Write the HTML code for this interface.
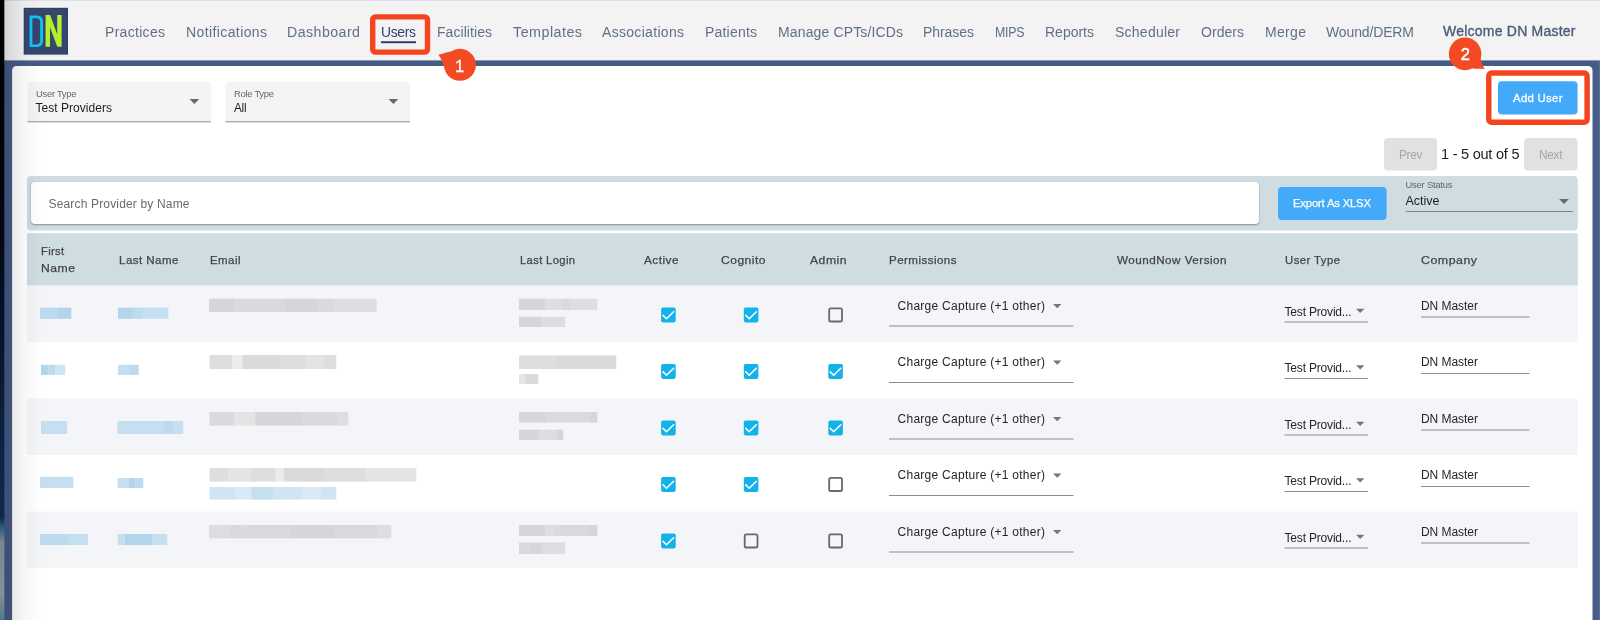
<!DOCTYPE html>
<html><head><meta charset="utf-8"><title>Users</title>
<style>
html,body{margin:0;padding:0;}
body{width:1600px;height:620px;overflow:hidden;position:relative;background:#465b86;font-family:"Liberation Sans",sans-serif;}
.a{position:absolute;}
.t{position:absolute;white-space:nowrap;line-height:16px;height:16px;}
.layer{position:absolute;left:0;top:0;width:1600px;height:620px;}
</style></head><body>
<svg class="layer" width="1600" height="620" viewBox="0 0 1600 620">
<rect x="0" y="0" width="1600" height="60.4" fill="#f3f3f3"/>
<rect x="0" y="0" width="1600" height="0.9" fill="#d9dcea"/>
<path d="M12.1 620 V70.5 a4.5 4.5 0 0 1 4.5 -4.5 H1588 a4.5 4.5 0 0 1 4.5 4.5 V620 Z" fill="#fff"/>
<g transform="translate(23.7 7.8)"><rect width="44.3" height="46.8" fill="#283860"/><rect x="0.6" y="0.7" width="43.1" height="45.5" fill="#35476e"/><path d="M5.9 7.7 H12.6 C17.3 7.7 19.3 10.2 19.3 14.7 V32.3 C19.3 36.8 17.3 39.3 12.6 39.3 H5.9 Z M8.7 10.4 V36.6 H12.5 C15.4 36.6 16.5 35.1 16.5 32.3 V14.7 C16.5 11.9 15.4 10.4 12.5 10.4 Z" fill="#12c2f4" fill-rule="evenodd"/><path d="M21.9 39 V7.3 H26.4 L33.5 26.5 V7.3 H37.9 V39 H33.6 L26.3 19.5 V39 Z" fill="#b6ef2e"/></g>
<rect x="381" y="41.2" width="35" height="2" fill="#2f426e"/>
<path d="M27.3 122 V85.7 a4 4 0 0 1 4 -4 H207 a4 4 0 0 1 4 4 V122 Z" fill="#f4f4f4"/>
<rect x="27.3" y="121.3" width="183.7" height="1" fill="#8f8f8f"/>
<path d="M189.50 99.10 h9.80 l-4.90 5.00 Z" fill="#6a6a6a"/>
<path d="M225.3 122 V85.7 a4 4 0 0 1 4 -4 H406 a4 4 0 0 1 4 4 V122 Z" fill="#f4f4f4"/>
<rect x="225.3" y="121.3" width="184.7" height="1" fill="#8f8f8f"/>
<path d="M388.50 99.10 h9.80 l-4.90 5.00 Z" fill="#6a6a6a"/>
<rect x="1498" y="81.3" width="79.6" height="33.2" rx="4" fill="#43aaf9"/>
<rect x="1384" y="138" width="53.1" height="32.6" rx="4" fill="#e1e1e1"/>
<rect x="1524" y="138" width="53.6" height="32.6" rx="4" fill="#e1e1e1"/>
<rect x="27" y="176" width="1550.7" height="54.4" rx="4" fill="#cfdce1"/>
<rect x="1278" y="187" width="108.6" height="33" rx="4" fill="#43aaf9"/>
<rect x="1405.5" y="211" width="167.5" height="1" fill="#858585"/>
<path d="M1559.10 198.90 h9.80 l-4.90 5.00 Z" fill="#6a6a6a"/>
<rect x="27" y="233.3" width="1550.7" height="52.4" fill="#cfdce1"/>
<rect x="27" y="285.50" width="1550.7" height="56.5" fill="#f4f5f9"/>
<rect x="661.10" y="307.40" width="14.6" height="15" rx="1.8" fill="#13b3e9"/><path d="M663.10 315.40 l3.4 3.3 l7.1 -7.0" fill="none" stroke="#fff" stroke-width="1.55" stroke-linecap="round" stroke-linejoin="round"/>
<rect x="743.80" y="307.40" width="14.6" height="15" rx="1.8" fill="#13b3e9"/><path d="M745.80 315.40 l3.4 3.3 l7.1 -7.0" fill="none" stroke="#fff" stroke-width="1.55" stroke-linecap="round" stroke-linejoin="round"/>
<rect x="829.20" y="308.30" width="12.8" height="13.2" rx="1.6" fill="none" stroke="#686868" stroke-width="1.8"/>
<rect x="889" y="325.50" width="184.5" height="1" fill="#8c8c8c"/><path d="M1053.00 303.90 h8.40 l-4.20 4.40 Z" fill="#777"/>
<rect x="1284.5" y="321.50" width="83.5" height="1" fill="#8c8c8c"/><path d="M1356.00 308.70 h8.40 l-4.20 4.40 Z" fill="#777"/>
<rect x="1421" y="316.50" width="108.5" height="1" fill="#8c8c8c"/>
<rect x="661.10" y="363.90" width="14.6" height="15" rx="1.8" fill="#13b3e9"/><path d="M663.10 371.90 l3.4 3.3 l7.1 -7.0" fill="none" stroke="#fff" stroke-width="1.55" stroke-linecap="round" stroke-linejoin="round"/>
<rect x="743.80" y="363.90" width="14.6" height="15" rx="1.8" fill="#13b3e9"/><path d="M745.80 371.90 l3.4 3.3 l7.1 -7.0" fill="none" stroke="#fff" stroke-width="1.55" stroke-linecap="round" stroke-linejoin="round"/>
<rect x="828.30" y="363.90" width="14.6" height="15" rx="1.8" fill="#13b3e9"/><path d="M830.30 371.90 l3.4 3.3 l7.1 -7.0" fill="none" stroke="#fff" stroke-width="1.55" stroke-linecap="round" stroke-linejoin="round"/>
<rect x="889" y="382.00" width="184.5" height="1" fill="#8c8c8c"/><path d="M1053.00 360.40 h8.40 l-4.20 4.40 Z" fill="#777"/>
<rect x="1284.5" y="378.00" width="83.5" height="1" fill="#8c8c8c"/><path d="M1356.00 365.20 h8.40 l-4.20 4.40 Z" fill="#777"/>
<rect x="1421" y="373.00" width="108.5" height="1" fill="#8c8c8c"/>
<rect x="27" y="398.50" width="1550.7" height="56.5" fill="#f4f5f9"/>
<rect x="661.10" y="420.40" width="14.6" height="15" rx="1.8" fill="#13b3e9"/><path d="M663.10 428.40 l3.4 3.3 l7.1 -7.0" fill="none" stroke="#fff" stroke-width="1.55" stroke-linecap="round" stroke-linejoin="round"/>
<rect x="743.80" y="420.40" width="14.6" height="15" rx="1.8" fill="#13b3e9"/><path d="M745.80 428.40 l3.4 3.3 l7.1 -7.0" fill="none" stroke="#fff" stroke-width="1.55" stroke-linecap="round" stroke-linejoin="round"/>
<rect x="828.30" y="420.40" width="14.6" height="15" rx="1.8" fill="#13b3e9"/><path d="M830.30 428.40 l3.4 3.3 l7.1 -7.0" fill="none" stroke="#fff" stroke-width="1.55" stroke-linecap="round" stroke-linejoin="round"/>
<rect x="889" y="438.50" width="184.5" height="1" fill="#8c8c8c"/><path d="M1053.00 416.90 h8.40 l-4.20 4.40 Z" fill="#777"/>
<rect x="1284.5" y="434.50" width="83.5" height="1" fill="#8c8c8c"/><path d="M1356.00 421.70 h8.40 l-4.20 4.40 Z" fill="#777"/>
<rect x="1421" y="429.50" width="108.5" height="1" fill="#8c8c8c"/>
<rect x="661.10" y="476.90" width="14.6" height="15" rx="1.8" fill="#13b3e9"/><path d="M663.10 484.90 l3.4 3.3 l7.1 -7.0" fill="none" stroke="#fff" stroke-width="1.55" stroke-linecap="round" stroke-linejoin="round"/>
<rect x="743.80" y="476.90" width="14.6" height="15" rx="1.8" fill="#13b3e9"/><path d="M745.80 484.90 l3.4 3.3 l7.1 -7.0" fill="none" stroke="#fff" stroke-width="1.55" stroke-linecap="round" stroke-linejoin="round"/>
<rect x="829.20" y="477.80" width="12.8" height="13.2" rx="1.6" fill="none" stroke="#686868" stroke-width="1.8"/>
<rect x="889" y="495.00" width="184.5" height="1" fill="#8c8c8c"/><path d="M1053.00 473.40 h8.40 l-4.20 4.40 Z" fill="#777"/>
<rect x="1284.5" y="491.00" width="83.5" height="1" fill="#8c8c8c"/><path d="M1356.00 478.20 h8.40 l-4.20 4.40 Z" fill="#777"/>
<rect x="1421" y="486.00" width="108.5" height="1" fill="#8c8c8c"/>
<rect x="27" y="511.50" width="1550.7" height="56.5" fill="#f4f5f9"/>
<rect x="661.10" y="533.40" width="14.6" height="15" rx="1.8" fill="#13b3e9"/><path d="M663.10 541.40 l3.4 3.3 l7.1 -7.0" fill="none" stroke="#fff" stroke-width="1.55" stroke-linecap="round" stroke-linejoin="round"/>
<rect x="744.70" y="534.30" width="12.8" height="13.2" rx="1.6" fill="none" stroke="#686868" stroke-width="1.8"/>
<rect x="829.20" y="534.30" width="12.8" height="13.2" rx="1.6" fill="none" stroke="#686868" stroke-width="1.8"/>
<rect x="889" y="551.50" width="184.5" height="1" fill="#8c8c8c"/><path d="M1053.00 529.90 h8.40 l-4.20 4.40 Z" fill="#777"/>
<rect x="1284.5" y="547.50" width="83.5" height="1" fill="#8c8c8c"/><path d="M1356.00 534.70 h8.40 l-4.20 4.40 Z" fill="#777"/>
<rect x="1421" y="542.50" width="108.5" height="1" fill="#8c8c8c"/>
<rect x="40.00" y="307.6" width="17.35" height="11.2" fill="#bcdbef"/>
<rect x="57.05" y="307.6" width="14.25" height="11.2" fill="#b2d5ec"/>
<rect x="118.00" y="307.6" width="14.30" height="11.2" fill="#b2d5ec"/>
<rect x="132.00" y="307.6" width="11.30" height="11.2" fill="#bcdbef"/>
<rect x="143.00" y="307.6" width="25.30" height="11.2" fill="#c5dff1"/>
<rect x="209.00" y="298.8" width="25.41" height="13.2" fill="#d5d6d8"/>
<rect x="234.11" y="298.8" width="50.52" height="13.2" fill="#dadadc"/>
<rect x="284.33" y="298.8" width="33.78" height="13.2" fill="#d5d6d8"/>
<rect x="317.81" y="298.8" width="17.04" height="13.2" fill="#dadadc"/>
<rect x="334.55" y="298.8" width="42.15" height="13.2" fill="#dedee0"/>
<rect x="519.00" y="298.8" width="26.04" height="11.2" fill="#d5d6d8"/>
<rect x="544.74" y="298.8" width="17.46" height="11.2" fill="#dedee0"/>
<rect x="561.90" y="298.8" width="9.66" height="11.2" fill="#dadadc"/>
<rect x="571.26" y="298.8" width="26.04" height="11.2" fill="#dedee0"/>
<rect x="519.00" y="316.8" width="23.30" height="10.2" fill="#d5d6d8"/>
<rect x="542.00" y="316.8" width="23.30" height="10.2" fill="#dedee0"/>
<rect x="41.00" y="364.8" width="7.50" height="10.2" fill="#b2d5ec"/>
<rect x="48.20" y="364.8" width="7.50" height="10.2" fill="#bcdbef"/>
<rect x="55.40" y="364.8" width="9.90" height="10.2" fill="#cfe5f4"/>
<rect x="118.00" y="364.8" width="10.50" height="10.2" fill="#c5dff1"/>
<rect x="128.20" y="364.8" width="10.50" height="10.2" fill="#bcdbef"/>
<rect x="209.50" y="355" width="23.07" height="14" fill="#dedee0"/>
<rect x="232.27" y="355" width="10.42" height="14" fill="#ececec"/>
<rect x="242.39" y="355" width="38.25" height="14" fill="#dadadc"/>
<rect x="280.34" y="355" width="25.60" height="14" fill="#dedee0"/>
<rect x="305.64" y="355" width="18.01" height="14" fill="#e4e4e5"/>
<rect x="323.35" y="355" width="12.95" height="14" fill="#dedee0"/>
<rect x="519.00" y="355.5" width="37.16" height="13.5" fill="#dedee0"/>
<rect x="555.86" y="355.5" width="60.44" height="13.5" fill="#dadadc"/>
<rect x="519.00" y="374" width="6.95" height="10" fill="#e4e4e5"/>
<rect x="525.65" y="374" width="12.65" height="10" fill="#dadadc"/>
<rect x="41.00" y="421" width="26.30" height="13" fill="#c5dff1"/>
<rect x="117.50" y="421" width="46.15" height="13" fill="#c5dff1"/>
<rect x="163.35" y="421" width="10.12" height="13" fill="#bcdbef"/>
<rect x="173.18" y="421" width="10.12" height="13" fill="#c5dff1"/>
<rect x="209.50" y="412" width="25.23" height="13.6" fill="#dadadc"/>
<rect x="234.43" y="412" width="21.07" height="13.6" fill="#e4e4e5"/>
<rect x="255.20" y="412" width="47.39" height="13.6" fill="#d5d6d8"/>
<rect x="302.29" y="412" width="36.31" height="13.6" fill="#dadadc"/>
<rect x="338.30" y="412" width="10.00" height="13.6" fill="#dedee0"/>
<rect x="519.00" y="412" width="27.60" height="10.5" fill="#d5d6d8"/>
<rect x="546.30" y="412" width="43.20" height="10.5" fill="#dadadc"/>
<rect x="589.20" y="412" width="8.10" height="10.5" fill="#d5d6d8"/>
<rect x="519.00" y="429.6" width="20.10" height="10.4" fill="#d5d6d8"/>
<rect x="538.80" y="429.6" width="17.90" height="10.4" fill="#dedee0"/>
<rect x="556.40" y="429.6" width="6.90" height="10.4" fill="#d5d6d8"/>
<rect x="40.00" y="476.8" width="33.30" height="11.2" fill="#c5dff1"/>
<rect x="117.60" y="478" width="11.73" height="10" fill="#c5dff1"/>
<rect x="129.03" y="478" width="6.65" height="10" fill="#b2d5ec"/>
<rect x="135.38" y="478" width="7.92" height="10" fill="#bcdbef"/>
<rect x="209.50" y="468" width="18.89" height="13.6" fill="#dedee0"/>
<rect x="228.09" y="468" width="23.02" height="13.6" fill="#e4e4e5"/>
<rect x="250.80" y="468" width="25.08" height="13.6" fill="#dedee0"/>
<rect x="275.58" y="468" width="8.56" height="13.6" fill="#ececec"/>
<rect x="283.84" y="468" width="41.60" height="13.6" fill="#dadadc"/>
<rect x="325.14" y="468" width="41.60" height="13.6" fill="#dedee0"/>
<rect x="366.44" y="468" width="49.86" height="13.6" fill="#e4e4e5"/>
<rect x="209.50" y="487" width="25.60" height="12.6" fill="#cfe5f4"/>
<rect x="234.80" y="487" width="16.75" height="12.6" fill="#d9eaf6"/>
<rect x="251.25" y="487" width="21.81" height="12.6" fill="#c5dff1"/>
<rect x="272.75" y="487" width="29.40" height="12.6" fill="#cfe5f4"/>
<rect x="301.85" y="487" width="19.27" height="12.6" fill="#d9eaf6"/>
<rect x="320.82" y="487" width="15.48" height="12.6" fill="#cfe5f4"/>
<rect x="40.00" y="534" width="28.86" height="11" fill="#bcdbef"/>
<rect x="68.56" y="534" width="19.34" height="11" fill="#c5dff1"/>
<rect x="117.60" y="534" width="7.71" height="11" fill="#c5dff1"/>
<rect x="125.01" y="534" width="27.47" height="11" fill="#b2d5ec"/>
<rect x="152.18" y="534" width="15.12" height="11" fill="#c5dff1"/>
<rect x="209.00" y="525" width="20.32" height="13.4" fill="#dedee0"/>
<rect x="229.02" y="525" width="16.68" height="13.4" fill="#dadadc"/>
<rect x="245.40" y="525" width="45.80" height="13.4" fill="#dadadc"/>
<rect x="290.90" y="525" width="43.98" height="13.4" fill="#d5d6d8"/>
<rect x="334.58" y="525" width="43.98" height="13.4" fill="#dadadc"/>
<rect x="378.26" y="525" width="13.04" height="13.4" fill="#dedee0"/>
<rect x="519.00" y="525" width="26.04" height="11" fill="#d5d6d8"/>
<rect x="544.74" y="525" width="9.66" height="11" fill="#dedee0"/>
<rect x="554.10" y="525" width="33.84" height="11" fill="#dadadc"/>
<rect x="587.64" y="525" width="9.66" height="11" fill="#d5d6d8"/>
<rect x="519.00" y="542.4" width="11.80" height="11.6" fill="#dadadc"/>
<rect x="530.50" y="542.4" width="11.80" height="11.6" fill="#d5d6d8"/>
<rect x="542.00" y="542.4" width="23.30" height="11.6" fill="#dedee0"/>
</svg>
<div class="a" style="left:31px;top:182px;width:1228px;height:41.5px;background:#fff;border-radius:4px;box-shadow:0 1px 2px rgba(0,0,0,.35)"></div>
<div class="layer" style="will-change:transform">
<div class="t" id="t0" style="left:105px;top:24.00px;font-size:14px;color:#616f8b;letter-spacing:0.303px;">Practices</div>
<div class="t" id="t1" style="left:186px;top:24.00px;font-size:14px;color:#616f8b;letter-spacing:0.395px;">Notifications</div>
<div class="t" id="t2" style="left:287px;top:24.00px;font-size:14px;color:#616f8b;letter-spacing:0.450px;transform:scaleX(1.0125);transform-origin:0 50%;">Dashboard</div>
<div class="t" id="t3" style="left:381px;top:24.00px;font-size:14px;color:#2f426e;letter-spacing:-0.300px;transform:scaleX(0.9897);transform-origin:0 50%;">Users</div>
<div class="t" id="t4" style="left:437px;top:24.00px;font-size:14px;color:#616f8b;letter-spacing:0.059px;">Facilities</div>
<div class="t" id="t5" style="left:513px;top:24.00px;font-size:14px;color:#616f8b;letter-spacing:0.450px;transform:scaleX(1.0235);transform-origin:0 50%;">Templates</div>
<div class="t" id="t6" style="left:602px;top:24.00px;font-size:14px;color:#616f8b;letter-spacing:0.310px;">Associations</div>
<div class="t" id="t7" style="left:705px;top:24.00px;font-size:14px;color:#616f8b;letter-spacing:0.201px;">Patients</div>
<div class="t" id="t8" style="left:778px;top:24.00px;font-size:14px;color:#616f8b;letter-spacing:0.138px;">Manage CPTs/ICDs</div>
<div class="t" id="t9" style="left:923px;top:24.00px;font-size:14px;color:#616f8b;letter-spacing:-0.060px;">Phrases</div>
<div class="t" id="t10" style="left:994.5px;top:24.00px;font-size:14px;color:#616f8b;letter-spacing:-0.300px;transform:scaleX(0.8850);transform-origin:0 50%;">MIPS</div>
<div class="t" id="t11" style="left:1045px;top:24.00px;font-size:14px;color:#616f8b;letter-spacing:-0.005px;">Reports</div>
<div class="t" id="t12" style="left:1115px;top:24.00px;font-size:14px;color:#616f8b;letter-spacing:0.244px;">Scheduler</div>
<div class="t" id="t13" style="left:1201px;top:24.00px;font-size:14px;color:#616f8b;letter-spacing:0.041px;">Orders</div>
<div class="t" id="t14" style="left:1265px;top:24.00px;font-size:14px;color:#616f8b;letter-spacing:0.328px;">Merge</div>
<div class="t" id="t15" style="left:1326px;top:24.00px;font-size:14px;color:#616f8b;letter-spacing:-0.135px;">Wound/DERM</div>
<div class="t" id="t16" style="left:1443px;top:22.50px;font-size:14px;color:#4b5b7c;letter-spacing:0.226px;-webkit-text-stroke:0.35px #4b5b7c;">Welcome DN Master</div>
<div class="t" id="t17" style="left:35.5px;top:85.50px;font-size:9.5px;color:#666;letter-spacing:-0.300px;transform:scaleX(0.9945);transform-origin:0 50%;">User Type</div>
<div class="t" id="t18" style="left:35.5px;top:99.50px;font-size:12px;color:#1e1e1e;letter-spacing:0.036px;">Test Providers</div>
<div class="t" id="t19" style="left:234px;top:85.50px;font-size:9.5px;color:#666;letter-spacing:-0.300px;transform:scaleX(0.9948);transform-origin:0 50%;">Role Type</div>
<div class="t" id="t20" style="left:234px;top:99.50px;font-size:12px;color:#1e1e1e;letter-spacing:-0.300px;transform:scaleX(0.9809);transform-origin:0 50%;">All</div>
<div class="t" id="t21" style="left:1513px;top:89.80px;font-size:11.4px;color:#fff;letter-spacing:0.288px;-webkit-text-stroke:0.3px #fff;">Add User</div>
<div class="t" id="t22" style="left:1399px;top:146.80px;font-size:12px;color:#a6a6a6;letter-spacing:-0.300px;transform:scaleX(0.9879);transform-origin:0 50%;">Prev</div>
<div class="t" id="t23" style="left:1441px;top:145.50px;font-size:14.5px;color:#1d1d1d;letter-spacing:-0.225px;">1 - 5 out of 5</div>
<div class="t" id="t24" style="left:1539px;top:146.80px;font-size:12px;color:#a6a6a6;letter-spacing:-0.300px;transform:scaleX(0.9879);transform-origin:0 50%;">Next</div>
<div class="t" id="t25" style="left:48.5px;top:195.50px;font-size:12px;color:#6b6b6b;letter-spacing:0.164px;">Search Provider by Name</div>
<div class="t" id="t26" style="left:1293px;top:194.60px;font-size:11.3px;color:#fff;letter-spacing:-0.183px;-webkit-text-stroke:0.25px #fff;">Export As XLSX</div>
<div class="t" id="t27" style="left:1405.5px;top:177.00px;font-size:9.5px;color:#666;letter-spacing:-0.264px;">User Status</div>
<div class="t" id="t28" style="left:1405.5px;top:193.00px;font-size:12.5px;color:#1e1e1e;letter-spacing:-0.009px;">Active</div>
<div class="t" id="t29" style="left:41px;top:243.00px;font-size:11.2px;color:#444;letter-spacing:0.312px;-webkit-text-stroke:0.25px #444;">First</div>
<div class="t" id="t30" style="left:41px;top:259.50px;font-size:11.2px;color:#444;letter-spacing:0.450px;transform:scaleX(1.0900);transform-origin:0 50%;-webkit-text-stroke:0.25px #444;">Name</div>
<div class="t" id="t31" style="left:118.5px;top:251.50px;font-size:11.2px;color:#444;letter-spacing:0.450px;transform:scaleX(1.0310);transform-origin:0 50%;-webkit-text-stroke:0.25px #444;">Last Name</div>
<div class="t" id="t32" style="left:210px;top:251.50px;font-size:11.2px;color:#444;letter-spacing:0.450px;transform:scaleX(1.0240);transform-origin:0 50%;-webkit-text-stroke:0.25px #444;">Email</div>
<div class="t" id="t33" style="left:520px;top:251.50px;font-size:11.2px;color:#444;letter-spacing:0.373px;-webkit-text-stroke:0.25px #444;">Last Login</div>
<div class="t" id="t34" style="left:644px;top:251.50px;font-size:11.2px;color:#444;letter-spacing:0.450px;transform:scaleX(1.0544);transform-origin:0 50%;-webkit-text-stroke:0.25px #444;">Active</div>
<div class="t" id="t35" style="left:720.5px;top:251.50px;font-size:11.2px;color:#444;letter-spacing:0.450px;transform:scaleX(1.0785);transform-origin:0 50%;-webkit-text-stroke:0.25px #444;">Cognito</div>
<div class="t" id="t36" style="left:810px;top:251.50px;font-size:11.2px;color:#444;letter-spacing:0.450px;transform:scaleX(1.0889);transform-origin:0 50%;-webkit-text-stroke:0.25px #444;">Admin</div>
<div class="t" id="t37" style="left:889px;top:251.50px;font-size:11.2px;color:#444;letter-spacing:0.450px;transform:scaleX(1.0315);transform-origin:0 50%;-webkit-text-stroke:0.25px #444;">Permissions</div>
<div class="t" id="t38" style="left:1116.5px;top:251.50px;font-size:11.2px;color:#444;letter-spacing:0.450px;transform:scaleX(1.0447);transform-origin:0 50%;-webkit-text-stroke:0.25px #444;">WoundNow Version</div>
<div class="t" id="t39" style="left:1284.5px;top:251.50px;font-size:11.2px;color:#444;letter-spacing:0.450px;transform:scaleX(1.0114);transform-origin:0 50%;-webkit-text-stroke:0.25px #444;">User Type</div>
<div class="t" id="t40" style="left:1421px;top:251.50px;font-size:11.2px;color:#444;letter-spacing:0.450px;transform:scaleX(1.1069);transform-origin:0 50%;-webkit-text-stroke:0.25px #444;">Company</div>
<div class="t" id="t41" style="left:897.5px;top:297.50px;font-size:12px;color:#262626;letter-spacing:0.268px;">Charge Capture (+1 other)</div>
<div class="t" id="t42" style="left:1284.5px;top:303.50px;font-size:12px;color:#262626;letter-spacing:-0.181px;">Test Provid...</div>
<div class="t" id="t43" style="left:1421px;top:297.50px;font-size:12px;color:#262626;letter-spacing:-0.043px;">DN Master</div>
<div class="t" id="t44" style="left:897.5px;top:354.00px;font-size:12px;color:#262626;letter-spacing:0.268px;">Charge Capture (+1 other)</div>
<div class="t" id="t45" style="left:1284.5px;top:360.00px;font-size:12px;color:#262626;letter-spacing:-0.181px;">Test Provid...</div>
<div class="t" id="t46" style="left:1421px;top:354.00px;font-size:12px;color:#262626;letter-spacing:-0.043px;">DN Master</div>
<div class="t" id="t47" style="left:897.5px;top:410.50px;font-size:12px;color:#262626;letter-spacing:0.268px;">Charge Capture (+1 other)</div>
<div class="t" id="t48" style="left:1284.5px;top:416.50px;font-size:12px;color:#262626;letter-spacing:-0.181px;">Test Provid...</div>
<div class="t" id="t49" style="left:1421px;top:410.50px;font-size:12px;color:#262626;letter-spacing:-0.043px;">DN Master</div>
<div class="t" id="t50" style="left:897.5px;top:467.00px;font-size:12px;color:#262626;letter-spacing:0.268px;">Charge Capture (+1 other)</div>
<div class="t" id="t51" style="left:1284.5px;top:473.00px;font-size:12px;color:#262626;letter-spacing:-0.181px;">Test Provid...</div>
<div class="t" id="t52" style="left:1421px;top:467.00px;font-size:12px;color:#262626;letter-spacing:-0.043px;">DN Master</div>
<div class="t" id="t53" style="left:897.5px;top:523.50px;font-size:12px;color:#262626;letter-spacing:0.268px;">Charge Capture (+1 other)</div>
<div class="t" id="t54" style="left:1284.5px;top:529.50px;font-size:12px;color:#262626;letter-spacing:-0.181px;">Test Provid...</div>
<div class="t" id="t55" style="left:1421px;top:523.50px;font-size:12px;color:#262626;letter-spacing:-0.043px;">DN Master</div>
</div>
<svg class="layer" width="1600" height="620" viewBox="0 0 1600 620">
<rect x="372.7" y="16.9" width="54.8" height="35.2" rx="2.8" fill="none" stroke="#f4431d" stroke-width="5.4"/>
<rect x="1488.8" y="73" width="98.3" height="49.2" rx="2.8" fill="none" stroke="#f4431d" stroke-width="5.4"/>
<path d="M438.2 54.8 C443 54 447 52 451 51.6 A16 16 0 1 1 444.8 70 C443.5 64 441.5 58.5 438.2 54.8 Z" fill="#f34a23"/>
<text x="459.6" y="71.6" font-family="Liberation Sans, sans-serif" font-size="16.5" fill="#fff" stroke="#fff" stroke-width="0.3" text-anchor="middle">1</text>
<path d="M1484.9 69.1 C1480.5 68.3 1476 69 1472 68.6 A16.3 16.3 0 1 1 1480.7 58.5 C1481.3 62.5 1482.5 66 1484.9 69.1 Z" fill="#f34a23"/>
<text x="1465.3" y="59.8" font-family="Liberation Sans, sans-serif" font-size="16.5" fill="#fff" stroke="#fff" stroke-width="0.5" text-anchor="middle">2</text>
<defs><linearGradient id="sh" x1="0" x2="1" y1="0" y2="0"><stop offset="0" stop-color="#000" stop-opacity=".13"/><stop offset=".2" stop-color="#000" stop-opacity=".085"/><stop offset=".5" stop-color="#000" stop-opacity=".03"/><stop offset="1" stop-color="#000" stop-opacity="0"/></linearGradient><linearGradient id="wp" x1="0" x2="0" y1="0" y2="1"><stop offset="0" stop-color="#000"/><stop offset=".28" stop-color="#01030a"/><stop offset=".48" stop-color="#050e24"/><stop offset=".7" stop-color="#0c2140"/><stop offset=".835" stop-color="#10294a"/><stop offset=".85" stop-color="#2a5a78"/><stop offset=".875" stop-color="#7a8790"/><stop offset=".96" stop-color="#858f97"/><stop offset="1" stop-color="#4a7a92"/></linearGradient></defs>
<rect x="4.3" y="0" width="40" height="620" fill="url(#sh)"/>
<rect x="0" y="0" width="4.35" height="620" fill="url(#wp)"/>
<rect x="1598.6" y="60.4" width="1.4" height="560" fill="#fff" fill-opacity=".1"/>
</svg>
</body></html>
